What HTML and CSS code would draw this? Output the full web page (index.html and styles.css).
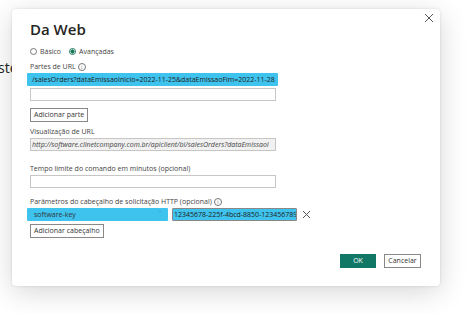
FILE: index.html
```html
<!DOCTYPE html>
<html lang="pt">
<head>
  <meta charset="UTF-8">
  <title>Da Web</title>
  <link rel="stylesheet" href="styles.css">
</head>
<body>
  <div class="behind">ste</div>
  <div class="dialog">
    <div class="close">
      <svg width="10" height="10" viewBox="0 0 10 10"><path d="M1 1L9 9M9 1L1 9" stroke="#555" stroke-width="1"/></svg>
    </div>
    <h1>Da Web</h1>

    <div class="radios">
      <label class="radio"><span class="dot"></span>Básico</label>
      <label class="radio"><span class="dot on"></span>Avançadas</label>
    </div>

    <div class="label">Partes de URL <span class="info">i</span></div>
    <div class="input marked">/salesOrders?dataEmissaoInicio=2022-11-25&amp;dataEmissaoFim=2022-11-28</div>
    <div class="input second"></div>
    <div class="btn add-part">Adicionar parte</div>

    <div class="label">Visualização de URL</div>
    <div class="input preview">http://software.clinetcompany.com.br/apiclient/bi/salesOrders?dataEmissaoI</div>

    <div class="label gap">Tempo limite do comando em minutos (opcional)</div>
    <div class="input"></div>

    <div class="label gap-sm">Parâmetros do cabeçalho de solicitação HTTP (opcional) <span class="info">i</span></div>
    <div class="header-row">
      <div class="select marked">software-key<span class="caret">˅</span></div>
      <div class="input value marked">12345678-225f-4bcd-8850-123456789</div>
      <svg class="remove" width="9" height="9" viewBox="0 0 9 9"><path d="M1 1L8 8M8 1L1 8" stroke="#555" stroke-width="1"/></svg>
    </div>
    <div class="btn add-head">Adicionar cabeçalho</div>

    <div class="footer">
      <div class="btn ok">OK</div>
      <div class="btn">Cancelar</div>
    </div>
  </div>
</body>
</html>
```

FILE: styles.css
```css
html, body { margin: 0; padding: 0; }
body { font-family: 'Open Sans', 'Noto Sans', sans-serif; background: #fff; color: #333; width: 474px; height: 314px; overflow: hidden; position: relative; padding: 9px 0 0 12px; box-sizing: border-box; }

.behind { position: absolute; left: -2px; top: 58px; font-size: 14px; color: #222; }

.dialog {
  position: relative;
  width: 428px; height: 277px;
  box-sizing: border-box;
  background: #fff;
  border-radius: 4px;
  box-shadow: 0 6px 28px rgba(0,0,0,0.16), 0 0 3px rgba(0,0,0,0.12);
  padding: 8px 19px 0 18px;
  font-size: 7px;
  display: flex; flex-direction: column;
}

.close { position: absolute; right: 6px; top: 4px; }

h1 { margin: 0; font-size: 15px; font-weight: 600; line-height: 24px; color: #252423; }

.radios { display: flex; gap: 8px; margin-top: 4px; height: 12px; align-items: center; }
.radio { display: flex; align-items: center; gap: 3px; color: #444; }
.dot { width: 5px; height: 5px; border: 1px solid #777; border-radius: 50%; box-sizing: content-box; }
.dot.on { border-color: #1b7a5a; background: radial-gradient(circle, #1b7a5a 55%, #fff 60%); }

.label { height: 12px; line-height: 12px; margin-top: 4px; color: #444; display: flex; align-items: center; gap: 2px; }
.label.gap { margin-top: 12px; }
.label.gap-sm { margin-top: 8px; }
.info { display: inline-flex; width: 6px; height: 6px; border: 1px solid #777; border-radius: 50%; font-size: 5px; line-height: 6px; justify-content: center; color: #666; }

.input {
  width: 246px; height: 13px;
  box-sizing: border-box;
  border: 1px solid #c8c6c4;
  line-height: 11px; padding: 0 1px;
  white-space: nowrap; overflow: hidden;
  color: #222;
}
.input.second { margin-top: 2px; }
.input.preview { background: #f1f1f1; font-style: italic; color: #444; }

.marked { background: #3ec3ee; border-color: #3ec3ee; box-shadow: -3px 0 0 #3ec3ee, 2px 0 0 #3ec3ee; border-radius: 1px; }

.btn {
  align-self: flex-start;
  height: 14px; line-height: 12px;
  box-sizing: border-box;
  border: 1px solid #8a8886;
  padding: 0 3px;
  color: #333;
  background: #fff;
}
.add-part { margin-top: 7px; }
.add-head { margin-top: 3px; }

.header-row { display: flex; align-items: center; height: 13px; }
.select { width: 136px; height: 13px; line-height: 13px; padding-left: 4px; box-sizing: border-box; position: relative; }
.caret { position: absolute; right: 5px; top: -1px; font-size: 6px; color: #555; }
.input.value { width: 125px; margin-left: 6px; border-color: #8a8886; box-shadow: none; }
.remove { margin-left: 5px; }

.footer { margin-top: auto; margin-bottom: 18px; display: flex; justify-content: flex-end; gap: 8px; }
.footer .btn { width: 37px; text-align: center; padding: 0; height: 14px; }
.btn.ok { background: #117865; border-color: #117865; color: #fff; width: 36px; }
```
